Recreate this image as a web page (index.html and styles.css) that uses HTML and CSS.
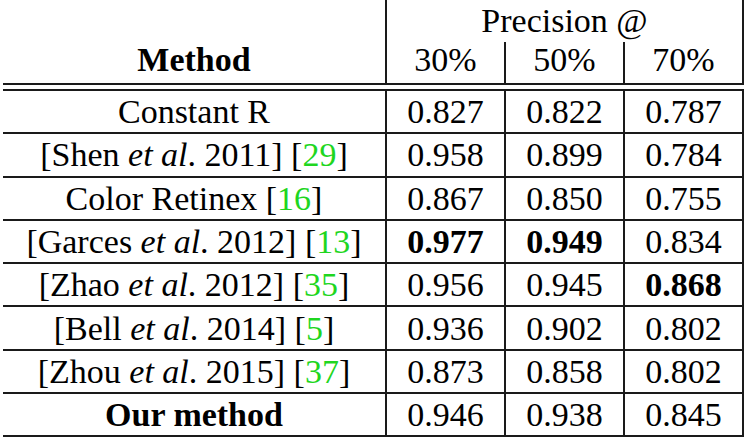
FILE: index.html
```html
<html>
<head>
<meta charset="utf-8">
<link rel="stylesheet" href="styles.css">
</head>
<body>
<table class="results">
   <colgroup>
      <col class="col-method">
      <col class="col-num">
      <col class="col-num">
      <col class="col-num">
   </colgroup>
   <thead>
   <tr class="head-top">
      <th class="method" rowspan="2">Method</th>
      <th class="group" colspan="3">Precision @</th>
   </tr>
   <tr class="head-sub">
      <th>30%</th>
      <th>50%</th>
      <th>70%</th>
   </tr>
   </thead>
   <tbody>
   <tr class="rule"><td colspan="4"></td></tr>
   <tr class="row">
      <td>Constant R</td>
      <td>0.827</td><td>0.822</td><td>0.787</td>
   </tr>
   <tr class="row">
      <td>[Shen <i>et al</i>. 2011] [<span class="cite">29</span>]</td>
      <td>0.958</td><td>0.899</td><td>0.784</td>
   </tr>
   <tr class="row">
      <td>Color Retinex [<span class="cite">16</span>]</td>
      <td>0.867</td><td>0.850</td><td>0.755</td>
   </tr>
   <tr class="row">
      <td>[Garces <i>et al</i>. 2012] [<span class="cite">13</span>]</td>
      <td><b>0.977</b></td><td><b>0.949</b></td><td>0.834</td>
   </tr>
   <tr class="row">
      <td>[Zhao <i>et al</i>. 2012] [<span class="cite">35</span>]</td>
      <td>0.956</td><td>0.945</td><td><b>0.868</b></td>
   </tr>
   <tr class="row">
      <td>[Bell <i>et al</i>. 2014] [<span class="cite">5</span>]</td>
      <td>0.936</td><td>0.902</td><td>0.802</td>
   </tr>
   <tr class="row">
      <td>[Zhou <i>et al</i>. 2015] [<span class="cite">37</span>]</td>
      <td>0.873</td><td>0.858</td><td>0.802</td>
   </tr>
   <tr class="row">
      <td><b>Our method</b></td>
      <td>0.946</td><td>0.938</td><td>0.845</td>
   </tr>
   </tbody>
</table>
</body>
</html>
```

FILE: styles.css
```css
body{
   margin: 0;
   background: #fff;
   font-family: "Liberation Serif", "Times New Roman", serif;
   color: #000;
}
.results{
   border-collapse: collapse;
   table-layout: fixed;
   width: 741px;
   margin-left: 3px;
   font-size: 34px;
}
.col-method{
   width: 383px;
}
.col-num{
   width: 119px;
}
th, td{
   padding: 0;
   text-align: center;
   font-weight: normal;
   line-height: 39px;
   border-right: 2px solid #1a1a1a;
   border-bottom: 2px solid #1a1a1a;
   white-space: nowrap;
}
th.method{
   font-weight: bold;
   line-height: 30px;
   vertical-align: bottom;
   padding-bottom: 8px;
   border-bottom: 0;
}
.head-top{
   height: 42px;
}
.head-top th.group{
   line-height: 34px;
   padding-top: 4px;
   vertical-align: top;
   border-bottom: 0;
}
.head-sub{
   height: 42px;
}
.head-sub th{
   line-height: 30px;
   vertical-align: bottom;
   padding-bottom: 8px;
   border-bottom: 0;
}
.rule{
   height: 6px;
}
.rule td{
   line-height: 0;
   border-top: 2px solid #1a1a1a;
   border-right: 0;
}
.row{
   height: 43.3px;
}
.cite{
   color: #1fd61f;
}
```
